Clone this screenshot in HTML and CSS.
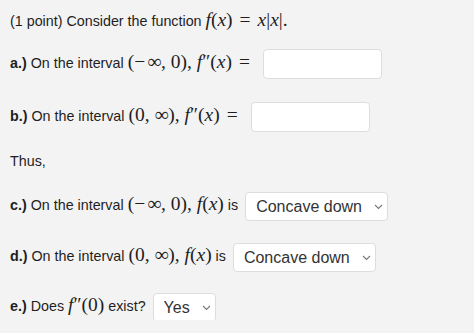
FILE: index.html
```html
<!DOCTYPE html>
<html>
<head>
    <title>Concavity</title>
    <link rel="stylesheet" href="styles.css">
</head>
<body>
    <div class="problem">
        <div class="row first">(1 point) Consider the function <span class="math"><i>f</i>(<i>x</i>)<span class="op">=</span><i>x</i>|<i>x</i>|.</span></div>

        <div class="row part-a"><b>a.)</b> On the interval <span class="math">(<span class="neg">−</span>∞, 0), <i>f</i>″(<i>x</i>)<span class="op">=</span></span><input class="answer" type="text"></div>

        <div class="row part-b"><b>b.)</b> On the interval <span class="math">(0, ∞), <i>f</i>″(<i>x</i>)<span class="op">=</span></span><input class="answer" type="text"></div>

        <div class="row thus">Thus,</div>

        <div class="row part-c"><b>c.)</b> On the interval <span class="math">(<span class="neg">−</span>∞, 0), <i>f</i>(<i>x</i>)</span> is <span class="pick wide"><select><option>Concave down</option><option>Concave up</option></select><svg class="chev" width="9" height="6" viewBox="0 0 9 6"><path d="M1 1l3.5 3.5L8 1" fill="none" stroke="#777" stroke-width="1.1"/></svg></span></div>

        <div class="row part-d"><b>d.)</b> On the interval <span class="math">(0, ∞), <i>f</i>(<i>x</i>)</span> is <span class="pick wide"><select><option>Concave down</option><option>Concave up</option></select><svg class="chev" width="9" height="6" viewBox="0 0 9 6"><path d="M1 1l3.5 3.5L8 1" fill="none" stroke="#777" stroke-width="1.1"/></svg></span></div>

        <div class="row part-e"><b>e.)</b> Does <span class="math"><i>f</i>″(0)</span> exist? <span class="pick small"><select><option>Yes</option><option>No</option></select><svg class="chev" width="9" height="6" viewBox="0 0 9 6"><path d="M1 1l3.5 3.5L8 1" fill="none" stroke="#777" stroke-width="1.1"/></svg></span></div>
    </div>
</body>
</html>
```

FILE: styles.css
```css
* {
    margin: 0;
    padding: 0;
    box-sizing: border-box;
}

body {
    background: #f3f3f3;
    font-family: "Liberation Sans", Arial, sans-serif;
    font-size: 14.3px;
    color: #1e1e1e;
}

.problem {
    padding: 5px 10px 0;
}

.row {
    height: 30px;
    line-height: 30px;
    white-space: nowrap;
}

.row.part-a { margin-top: 12px; }
.row.part-b { margin-top: 23px; }
.row.thus   { margin-top: 19px; height: 24px; line-height: 24px; }
.row.part-c { margin-top: 16px; }
.row.part-d { margin-top: 21px; }
.row.part-e { margin-top: 20px; }

.math {
    font-family: "Liberation Serif", "Times New Roman", serif;
    font-size: 19.5px;
}

.math i {
    font-style: italic;
}

.neg {
    padding-right: 2px;
}

.op {
    margin: 0 7px;
}

.answer {
    width: 119px;
    height: 30px;
    margin-left: 6px;
    vertical-align: middle;
    background: #fff;
    border: 1px solid #ddd;
    border-radius: 4px;
}

.pick {
    position: relative;
    display: inline-block;
    vertical-align: middle;
    height: 29px;
    margin-left: 3px;
}

.pick select {
    appearance: none;
    -webkit-appearance: none;
    display: block;
    height: 29px;
    background: #fff;
    border: 1px solid #ddd;
    border-radius: 4px;
    font-family: "Liberation Sans", Arial, sans-serif;
    font-size: 16px;
    color: #333;
    padding: 0 0 0 10px;
}

.pick.wide select {
    width: 143px;
}

.pick.small select {
    width: 63px;
}

.pick .chev {
    position: absolute;
    right: 5px;
    top: 12px;
}
```
